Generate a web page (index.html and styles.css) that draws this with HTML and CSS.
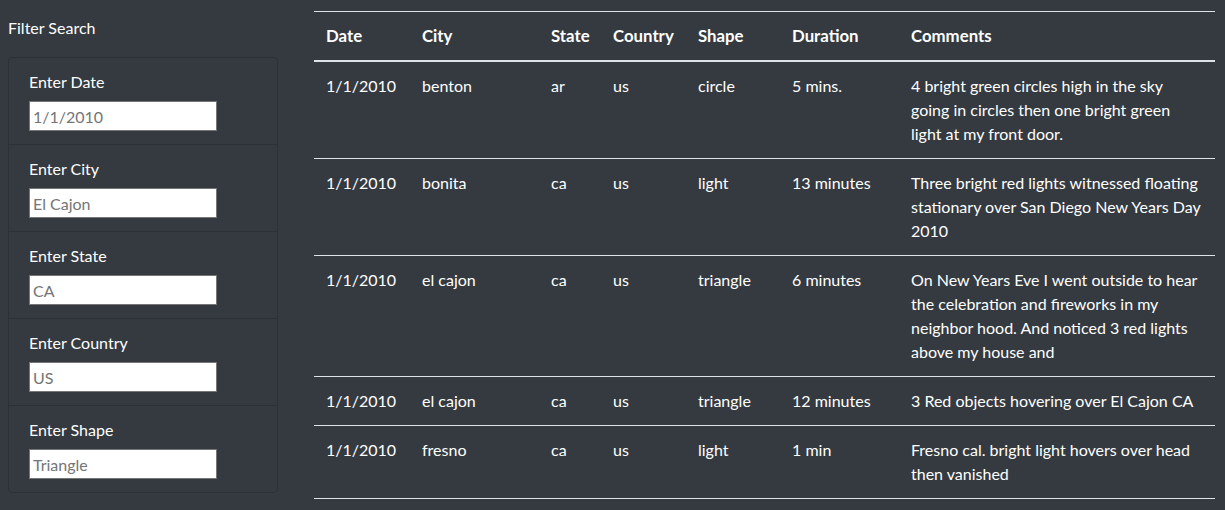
FILE: index.html
```html
<!DOCTYPE html>
<html lang="en">
<head>
<meta charset="utf-8">
<title>UFO Sightings</title>
<link rel="stylesheet" href="styles.css">
</head>
<body>
<div class="page">
  <aside class="sidebar">
    <div class="filter-title">Filter Search</div>
    <ul class="filters">
      <li class="filter-item"><label class="filter-label" for="d">Enter Date</label><input class="filter-input" id="d" type="text" placeholder="1/1/2010"></li>
      <li class="filter-item"><label class="filter-label" for="c">Enter City</label><input class="filter-input" id="c" type="text" placeholder="El Cajon"></li>
      <li class="filter-item"><label class="filter-label" for="s">Enter State</label><input class="filter-input" id="s" type="text" placeholder="CA"></li>
      <li class="filter-item"><label class="filter-label" for="n">Enter Country</label><input class="filter-input" id="n" type="text" placeholder="US"></li>
      <li class="filter-item"><label class="filter-label" for="h">Enter Shape</label><input class="filter-input" id="h" type="text" placeholder="Triangle"></li>
    </ul>
  </aside>
  <main class="results">
    <table class="ufo-table">
      <colgroup>
        <col class="c-date"><col class="c-city"><col class="c-state"><col class="c-country"><col class="c-shape"><col class="c-duration"><col class="c-comments">
      </colgroup>
      <thead>
        <tr><th>Date</th><th>City</th><th>State</th><th>Country</th><th>Shape</th><th>Duration</th><th>Comments</th></tr>
      </thead>
      <tbody>
        <tr><td>1/1/2010</td><td>benton</td><td>ar</td><td>us</td><td>circle</td><td>5 mins.</td><td>4 bright green circles high in the sky going in circles then one bright green light at my front door.</td></tr>
        <tr><td>1/1/2010</td><td>bonita</td><td>ca</td><td>us</td><td>light</td><td>13 minutes</td><td>Three bright red lights witnessed floating stationary over San Diego New Years Day 2010</td></tr>
        <tr><td>1/1/2010</td><td>el cajon</td><td>ca</td><td>us</td><td>triangle</td><td>6 minutes</td><td>On New Years Eve I went outside to hear the celebration and fireworks in my neighbor hood. And noticed 3 red lights above my house and</td></tr>
        <tr><td>1/1/2010</td><td>el cajon</td><td>ca</td><td>us</td><td>triangle</td><td>12 minutes</td><td>3 Red objects hovering over El Cajon CA</td></tr>
        <tr><td>1/1/2010</td><td>fresno</td><td>ca</td><td>us</td><td>light</td><td>1 min</td><td>Fresno cal. bright light hovers over head then vanished</td></tr>
      </tbody>
    </table>
  </main>
</div>
</body>
</html>
```

FILE: styles.css
```css
* { box-sizing: border-box; }
html, body {
  margin: 0;
  background: #343a40;
  color: #fff;
  font-family: Lato, "Open Sans", sans-serif;
  font-size: 16px;
  line-height: 24px;
}
.page {
  display: flex;
  padding: 11px 10px 0 8px;
  gap: 36px;
}
.sidebar {
  width: 270px;
  flex: none;
}
.filter-title {
  height: 34px;
  padding-top: 5px;
  margin-bottom: 12px;
}
.filters {
  list-style: none;
  margin: 0;
  padding: 0;
  border: 1px solid rgba(0,0,0,0.15);
  border-radius: 4px;
}
.filter-item {
  padding: 12px 20px;
  border-bottom: 1px solid rgba(0,0,0,0.15);
  height: 87px;
}
.filter-item:last-child { border-bottom: 0; height: 86px; }
.filter-label {
  display: block;
  margin-bottom: 7px;
}
.filter-input {
  display: block;
  width: 188px;
  height: 30px;
  border: 1px solid #767676;
  padding: 2px 3px;
  font: inherit;
  color: #333;
  background: #fff;
}
.filter-input::placeholder { color: #757575; }
.results {
  flex: 1;
}
.ufo-table {
  width: 901px;
  border-collapse: collapse;
  table-layout: fixed;
  border-top: 1px solid #dee2e6;
}
.c-date { width: 96px; }
.c-city { width: 129px; }
.c-state { width: 62px; }
.c-country { width: 85px; }
.c-shape { width: 94px; }
.c-duration { width: 119px; }
.c-comments { width: 316px; }
.ufo-table th, .ufo-table td {
  padding: 12px;
  text-align: left;
  vertical-align: top;
}
.ufo-table th {
  font-weight: bold;
  font-size: 16.8px;
  border-bottom: 2px solid #dee2e6;
}
.ufo-table td {
  border-bottom: 1px solid #dee2e6;
}
```
